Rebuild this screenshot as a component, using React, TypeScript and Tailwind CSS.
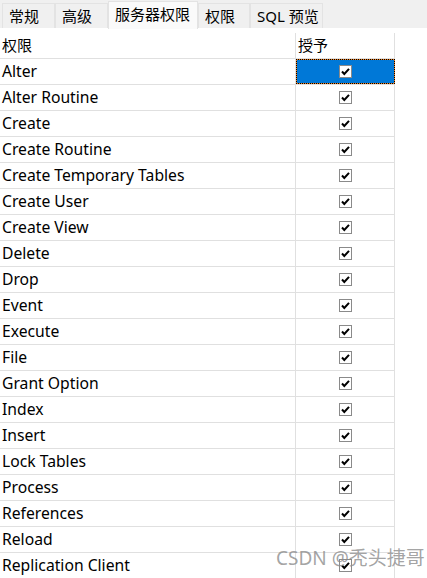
import React from "react";

const rows = [
  "Alter",
  "Alter Routine",
  "Create",
  "Create Routine",
  "Create Temporary Tables",
  "Create User",
  "Create View",
  "Delete",
  "Drop",
  "Event",
  "Execute",
  "File",
  "Grant Option",
  "Index",
  "Insert",
  "Lock Tables",
  "Process",
  "References",
  "Reload",
  "Replication Client",
];

const tabs = [
  { label: "常规", w: "w-[53px]" },
  { label: "高级", w: "w-[53px]" },
  { label: "服务器权限", w: "w-[90px]", active: true },
  { label: "权限", w: "w-[52px]" },
  { label: "SQL 预览", w: "w-[73px]" },
];

function CheckBox() {
  return (
    <div className="w-[13px] h-[13px] border border-[#8a8a8a] bg-white flex items-center justify-center">
      <svg width="9" height="9" viewBox="0 0 9 9">
        <path d="M1 4.5 L3.3 7 L8 1.8" stroke="#000" strokeWidth="2" fill="none" />
      </svg>
    </div>
  );
}

export default function App() {
  return (
    <div
      className="relative w-[427px] h-[578px] overflow-hidden bg-white text-black text-[15.7px]"
      style={{ fontFamily: '"Noto Sans", "Noto Sans CJK SC", sans-serif' }}
    >
      <div className="flex items-end h-[28px] bg-[#f0f0f0] pl-[2px] text-[15px]">
        {tabs.map((t) =>
          t.active ? (
            <div
              key={t.label}
              className={`${t.w} h-[28px] bg-[#fafafa] border-x border-t border-[#e3e3e3] flex items-center pl-[6px] leading-none -mb-[1px] pb-[3px] whitespace-nowrap`}
            >
              {t.label}
            </div>
          ) : (
            <div
              key={t.label}
              className={`${t.w} h-[25px] bg-[#f0f0f0] border-x border-t border-[#e3e3e3] flex items-center pl-[6px] leading-none whitespace-nowrap`}
            >
              {t.label}
            </div>
          )
        )}
      </div>
      <div className="pt-[5px]">
        <div className="w-[395px] flex flex-col">
          <div className="flex h-[26px] border-b border-[#e0e0e0] text-[15px]">
            <div className="w-[296px] border-r border-[#e0e0e0] pl-[2px] flex items-center">权限</div>
            <div className="w-[99px] border-r border-[#e0e0e0] pl-[2px] flex items-center">授予</div>
          </div>
          {rows.map((r, i) => (
            <div key={r} className="flex h-[26px] border-b border-[#e0e0e0]">
              <div className="w-[296px] border-r border-[#e0e0e0] pl-[2px] flex items-center whitespace-nowrap">
                {r}
              </div>
              {i === 0 ? (
                <div className="w-[99px] bg-[#f08020] border-[1px] border-dotted border-black">
                  <div className="w-full h-full bg-[#0078d7] flex items-center justify-center">
                    <CheckBox />
                  </div>
                </div>
              ) : (
                <div className="w-[99px] border-r border-[#e0e0e0] flex items-center justify-center">
                  <CheckBox />
                </div>
              )}
            </div>
          ))}
        </div>
      </div>
      <div className="absolute left-[276px] top-[544px] text-[19px] text-[#8c8c8c]/80 whitespace-nowrap">
        CSDN @秃头捷哥
      </div>
    </div>
  );
}
